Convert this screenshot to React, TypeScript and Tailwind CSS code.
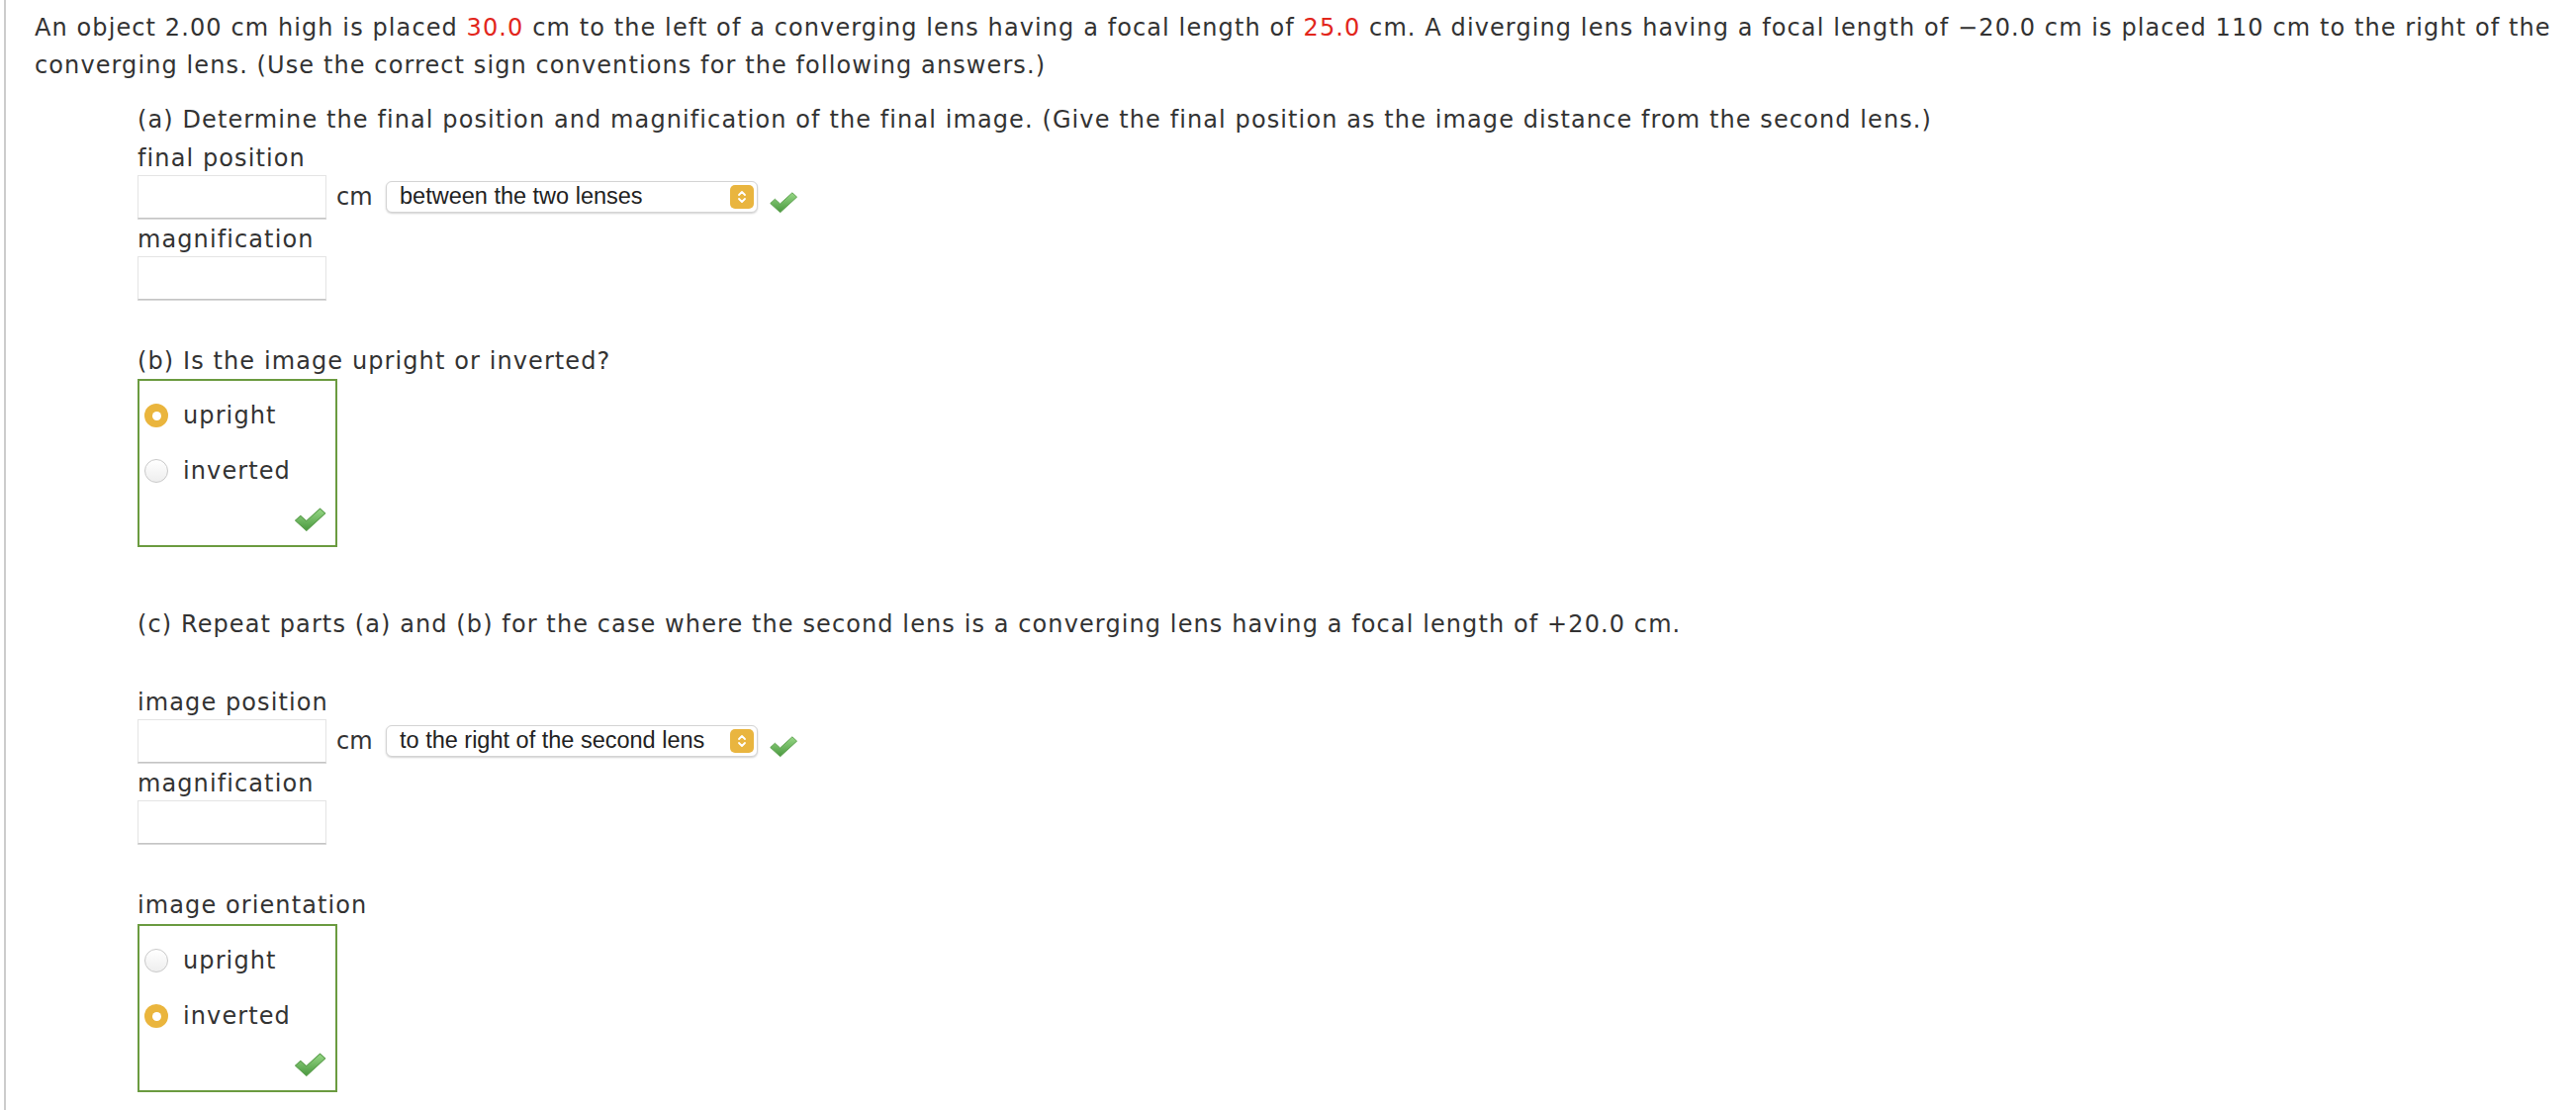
import React from "react";

// ── Small drawings ───────────────────────────────────────────────────────────

function CheckMark({ className = "" }: { className?: string }) {
  return (
    <svg viewBox="0 0 32 24" className={className} aria-hidden="true">
      <defs>
        <linearGradient id="chk" x1="0" y1="0" x2="0" y2="1">
          <stop offset="0" stopColor="#97d886" />
          <stop offset="1" stopColor="#4a983f" />
        </linearGradient>
      </defs>
      <path
        d="M1.5 12.6 L6.6 7.9 L12.3 13.1 L25.7 0.9 L30.8 5.6 L12.4 22.6 Z"
        fill="url(#chk)"
        stroke="#5b9f4d"
        strokeWidth="1"
        strokeLinejoin="round"
      />
    </svg>
  );
}

function Stepper() {
  return (
    <span className="flex h-[24px] w-[24px] items-center justify-center rounded-[5px] bg-[#e9b53f]">
      <svg viewBox="0 0 24 24" className="h-[24px] w-[24px]" aria-hidden="true">
        <path d="M9 10 L12 7 L15 10" fill="none" stroke="#fff" strokeWidth="1.8" strokeLinecap="round" strokeLinejoin="round" />
        <path d="M9 14 L12 17 L15 14" fill="none" stroke="#fff" strokeWidth="1.8" strokeLinecap="round" strokeLinejoin="round" />
      </svg>
    </span>
  );
}

function Radio({ checked }: { checked: boolean }) {
  if (checked) {
    return (
      <span className="flex h-[24px] w-[24px] shrink-0 items-center justify-center rounded-full bg-[#eab53d]">
        <span className="h-[9px] w-[9px] rounded-full bg-white" />
      </span>
    );
  }
  return (
    <span className="h-[24px] w-[24px] shrink-0 rounded-full border border-[#c9c9c9] bg-gradient-to-b from-white to-[#eeeeee]" />
  );
}

// ── Form pieces ──────────────────────────────────────────────────────────────

function TextBox() {
  return (
    <div className="h-[44px] w-[191px] border border-[#e4e4e4] border-b-[#c4c4c4] bg-white shadow-[0_1px_0_#d8d8d8]" />
  );
}

function AnswerRow({ choice }: { choice: string }) {
  return (
    <div className="mb-[4px] flex h-[44px] items-center">
      <TextBox />
      <span className="ml-[10px] w-[50px] tracking-normal">cm</span>
      <div className="flex h-[32px] w-[376px] items-center justify-between rounded-[6px] border border-[#d4d4d4] bg-white pl-[13px] pr-[3px] font-['Liberation_Sans',Arial,sans-serif] text-[23.5px] tracking-normal text-[#222] shadow-[0_1px_2px_rgba(0,0,0,0.18)]">
        <span>{choice}</span>
        <Stepper />
      </div>
      <CheckMark className="ml-[10px] mt-[12px] h-[22px] w-[32px]" />
    </div>
  );
}

function RadioGroup({ value }: { value: "upright" | "inverted" }) {
  return (
    <div className="flex h-[170px] w-[202px] flex-col border-2 border-[#6b9b40] pl-[5px] pr-[9px] pt-[7px]">
      {(["upright", "inverted"] as const).map((opt) => (
        <div key={opt} className="flex h-[56px] items-center gap-[15px]">
          <Radio checked={opt === value} />
          <span>{opt}</span>
        </div>
      ))}
      <div className="mt-[9px] flex justify-end">
        <CheckMark className="h-[25px] w-[33px]" />
      </div>
    </div>
  );
}

// ── Page ─────────────────────────────────────────────────────────────────────

export default function App() {
  const red = "text-[#e2261c]";
  return (
    <div className="min-h-screen bg-white font-['DejaVu_Sans',Verdana,sans-serif] text-[24px] tracking-[1.1px] text-[#333]">
      <div className="ml-[4px] min-h-[1122px] border-l-2 border-[#cccccc] pb-[20px] pl-[29px] pr-[10px] pt-[9px]">
        <p className="leading-[38px]">
          An object 2.00 cm high is placed <span className={red}>30.0</span> cm to the left of a converging lens
          having a focal length of <span className={red}>25.0</span> cm. A diverging lens having a focal length of
          −20.0 cm is placed 110 cm to the right of the converging lens. (Use the correct sign conventions for the
          following answers.)
        </p>

        <div className="ml-[104px]">
          <p className="mt-[19px] leading-[34px]">
            (a) Determine the final position and magnification of the final image. (Give the final position as the
            image distance from the second lens.)
          </p>
          <p className="mt-[5px] leading-[34px]">final position</p>
          <AnswerRow choice="between the two lenses" />
          <p className="leading-[34px]">magnification</p>
          <TextBox />

          <p className="mt-[45px] leading-[34px]">(b) Is the image upright or inverted?</p>
          <div className="mt-[1px]">
            <RadioGroup value="upright" />
          </div>

          <p className="mt-[61px] leading-[34px]">
            (c) Repeat parts (a) and (b) for the case where the second lens is a converging lens having a focal
            length of +20.0 cm.
          </p>
          <p className="mt-[45px] leading-[34px]">image position</p>
          <AnswerRow choice="to the right of the second lens" />
          <p className="leading-[34px]">magnification</p>
          <TextBox />

          <p className="mt-[45px] leading-[34px]">image orientation</p>
          <div className="mt-[2px]">
            <RadioGroup value="inverted" />
          </div>
        </div>
      </div>
    </div>
  );
}
